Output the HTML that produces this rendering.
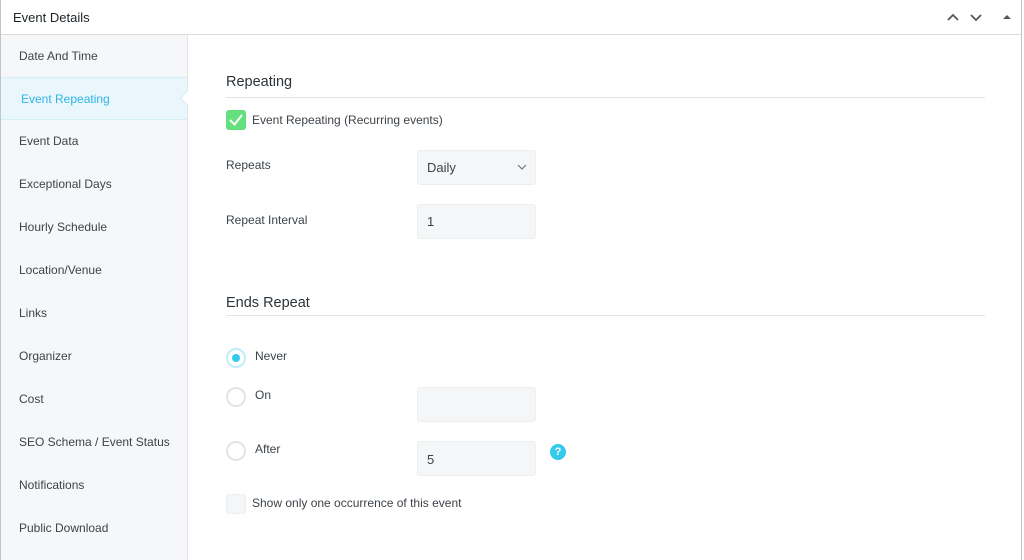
<!DOCTYPE html>
<html><head><style>
*{box-sizing:border-box;margin:0;padding:0}
body{width:1024px;height:560px;background:#fff;font-family:"Liberation Sans",sans-serif;color:#3c434a;position:relative;overflow:hidden}
.frame{position:absolute;left:0;top:0;width:1022px;height:560px;border-left:1px solid #c3c4c7;border-right:1px solid #c3c4c7}
.hdr{position:absolute;left:1px;top:0;width:1020px;height:35px;border-bottom:1px solid #dcdcde}
.hdr span{position:absolute;left:12px;top:10px;font-size:13px;color:#1d2327}
.side{position:absolute;left:1px;top:35px;width:187px;height:525px;background:#f6f7f9;border-right:1px solid #e2e4e7}
.it{position:absolute;left:0;width:186px;height:43px;font-size:12px;color:#3c434a;padding-left:18px;line-height:43px}
.act{background:#e9f6fc;color:#2fb5e8;border-top:1px solid #d4eef9;border-bottom:1px solid #d4eef9;padding-left:20px}
.t{position:absolute;font-size:12px;color:#3c434a}
.h{position:absolute;font-size:14.5px;color:#2c3338}
.line{position:absolute;left:226px;width:759px;height:1px;background:#e2e4e7}
.box{position:absolute;width:119px;height:35px;background:#f5f6f8;border:1px solid #eceef0;border-radius:3px;font-size:13px;padding-left:9px;line-height:33px;color:#3c434a}
.rad{position:absolute;left:226px;width:20px;height:20px;border-radius:50%;border:2px solid #e2e4e7;background:#fff}
</style></head><body>
<div class="frame"></div>
<div class="hdr"><span>Event Details</span>
<svg style="position:absolute;left:945px;top:11px" width="70" height="12" viewBox="0 0 70 12"><path d="M2 9 L7 4 L12 9" fill="none" stroke="#50575e" stroke-width="1.8"/><path d="M25 4 L30 9 L35 4" fill="none" stroke="#50575e" stroke-width="1.8"/><path d="M57 8 L61 4 L65 8Z" fill="#50575e"/></svg>
</div>
<div class="side">
<div class="it" style="top:0">Date And Time</div>
<div class="it act" style="top:42px">Event Repeating</div>
<div class="it" style="top:85px">Event Data</div>
<div class="it" style="top:128px">Exceptional Days</div>
<div class="it" style="top:171px">Hourly Schedule</div>
<div class="it" style="top:214px">Location/Venue</div>
<div class="it" style="top:257px">Links</div>
<div class="it" style="top:300px">Organizer</div>
<div class="it" style="top:343px">Cost</div>
<div class="it" style="top:386px">SEO Schema / Event Status</div>
<div class="it" style="top:429px">Notifications</div>
<div class="it" style="top:472px">Public Download</div>
</div>
<svg style="position:absolute;left:180px;top:90px" width="9" height="16"><path d="M8 0 L1 8 L8 16" fill="#fff" stroke="#d4eef9"/></svg>
<div class="h" style="left:226px;top:74px">Repeating</div>
<div class="line" style="top:97px"></div>
<div style="position:absolute;left:226px;top:110px;width:20px;height:20px;background:#64e07e;border-radius:3px"><svg width="20" height="20"><path d="M4 10 L8.5 14.5 L16 5" fill="none" stroke="#fff" stroke-width="2"/></svg></div>
<div class="t" style="left:252px;top:113px">Event Repeating (Recurring events)</div>
<div class="t" style="left:226px;top:158px">Repeats</div>
<div class="box" style="left:417px;top:150px">Daily<svg style="position:absolute;right:8px;top:13px" width="10" height="7"><path d="M1 1 L5 5 L9 1" fill="none" stroke="#777" stroke-width="1.2"/></svg></div>
<div class="t" style="left:226px;top:213px">Repeat Interval</div>
<div class="box" style="left:417px;top:204px">1</div>
<div class="h" style="left:226px;top:295px">Ends Repeat</div>
<div class="line" style="top:315px"></div>
<div class="rad" style="top:348px;border-color:#bfeefa"><div style="position:absolute;left:4px;top:4px;width:8px;height:8px;border-radius:50%;background:#35c9ee"></div></div>
<div class="t" style="left:255px;top:349px">Never</div>
<div class="rad" style="top:387px"></div>
<div class="t" style="left:255px;top:388px">On</div>
<div class="box" style="left:417px;top:387px"></div>
<div class="rad" style="top:441px"></div>
<div class="t" style="left:255px;top:442px">After</div>
<div class="box" style="left:417px;top:441px;line-height:36px">5</div>
<div style="position:absolute;left:550px;top:444px;width:16px;height:16px;border-radius:50%;background:#35c9ee;color:#fff;font-size:11px;font-weight:bold;text-align:center;line-height:16px">?</div>
<div style="position:absolute;left:226px;top:494px;width:20px;height:20px;background:#f5f6f8;border:1px solid #eceef0;border-radius:3px"></div>
<div class="t" style="left:252px;top:496px">Show only one occurrence of this event</div>
</body></html>
